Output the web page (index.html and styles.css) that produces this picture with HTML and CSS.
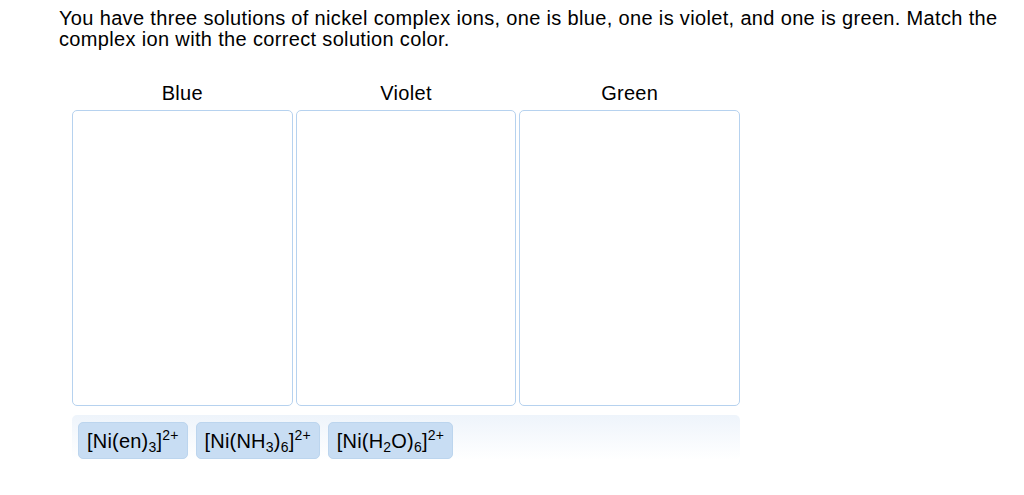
FILE: index.html
```html
<!DOCTYPE html>
<html>
<head>
<meta charset="utf-8">
<link rel="stylesheet" href="styles.css">
</head>
<body>
<div class="page">
  <p class="question">You have three solutions of nickel complex ions, one is blue, one is violet, and one is green. Match the complex ion with the correct solution color.</p>
  <div class="bins">
    <div class="bin">
      <div class="bin-label">Blue</div>
      <div class="bin-box"></div>
    </div>
    <div class="bin">
      <div class="bin-label">Violet</div>
      <div class="bin-box"></div>
    </div>
    <div class="bin">
      <div class="bin-label">Green</div>
      <div class="bin-box"></div>
    </div>
  </div>
  <div class="tray">
    <span class="chip">[Ni(en)<sub>3</sub>]<sup>2+</sup></span>
    <span class="chip">[Ni(NH<sub>3</sub>)<sub>6</sub>]<sup>2+</sup></span>
    <span class="chip">[Ni(H<sub>2</sub>O)<sub>6</sub>]<sup>2+</sup></span>
  </div>
</div>
</body>
</html>
```

FILE: styles.css
```css
html, body {
  margin: 0;
  padding: 0;
  background: #fff;
}
body {
  font-family: "Liberation Sans", Arial, sans-serif;
  color: #000;
}
.page {
  padding: 8px 0 0 59px;
}
.question {
  margin: 0;
  font-size: 20px;
  line-height: 21px;
  letter-spacing: 0.34px;
  width: 950px;
}
.bins {
  display: flex;
  gap: 3px;
  margin: 31px 0 0 13px;
  width: 668px;
}
.bin {
  flex: 1;
  display: flex;
  flex-direction: column;
}
.bin-label {
  text-align: center;
  font-size: 20px;
  line-height: 24px;
  height: 29px;
  letter-spacing: 0.3px;
}
.bin-box {
  height: 294px;
  border: 1px solid #b6d2ef;
  border-radius: 5px;
}
.tray {
  margin: 9px 0 0 13px;
  width: 659px;
  height: 38px;
  padding: 7px 3px 0 6px;
  border-radius: 5px;
  background: linear-gradient(#eef4fb, #ffffff);
  display: flex;
  gap: 8px;
  align-items: flex-start;
}
.chip {
  display: inline-block;
  height: 37px;
  box-sizing: border-box;
  padding: 0 8px;
  line-height: 37px;
  font-size: 20px;
  letter-spacing: 0.2px;
  background: #c8ddf3;
  border: 1px solid #bcd5ee;
  border-radius: 5px;
  color: #000;
}
.chip sub {
  font-size: 14px;
  vertical-align: -4px;
  line-height: 0;
}
.chip sup {
  font-size: 14px;
  vertical-align: 8px;
  line-height: 0;
}
```
